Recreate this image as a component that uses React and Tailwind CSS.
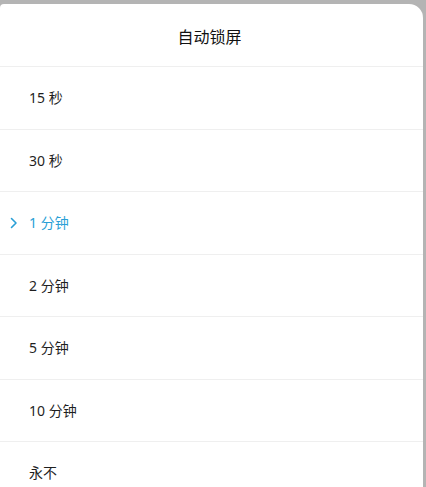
import React from 'react';

const OPTIONS = ['15 秒', '30 秒', '1 分钟', '2 分钟', '5 分钟', '10 分钟', '永不'];

function Chevron() {
  return (
    <svg width="8" height="12" viewBox="0 0 8 12" className="absolute left-[10px] top-1/2 -translate-y-1/2">
      <path d="M1.5 1.5 L6 6 L1.5 10.5" fill="none" stroke="#2a9fd6" strokeWidth="1.6" strokeLinecap="round" strokeLinejoin="round" />
    </svg>
  );
}

export default function App() {
  const selected = '1 分钟';
  return (
    <div
      className="h-[487px] w-[426px] overflow-hidden bg-[#b4b4b4] pt-[4px] pr-[3px]"
      style={{ fontFamily: '"Noto Sans", "Noto Sans CJK SC", sans-serif' }}
    >
      <div className="h-full bg-white rounded-tr-[14px] rounded-tl-[4px] flex flex-col">
        {/* Header */}
        <div className="h-[63px] flex items-center justify-center border-b border-[#efefef] shrink-0">
          <span className="text-[16px] font-normal text-[#111111] pt-[3px] pr-[4px]">自动锁屏</span>
        </div>
        {OPTIONS.map(o => {
          const active = o === selected;
          return (
            <div
              key={o}
              className="relative h-[62.5px] shrink-0 flex items-center pl-[29px] border-b border-[#efefef] box-border"
            >
              {active && <Chevron />}
              <span className={active ? 'text-[14px] text-[#2a9fd6]' : 'text-[14px] text-[#1f1f1f]'}>{o}</span>
            </div>
          );
        })}
      </div>
    </div>
  );
}
